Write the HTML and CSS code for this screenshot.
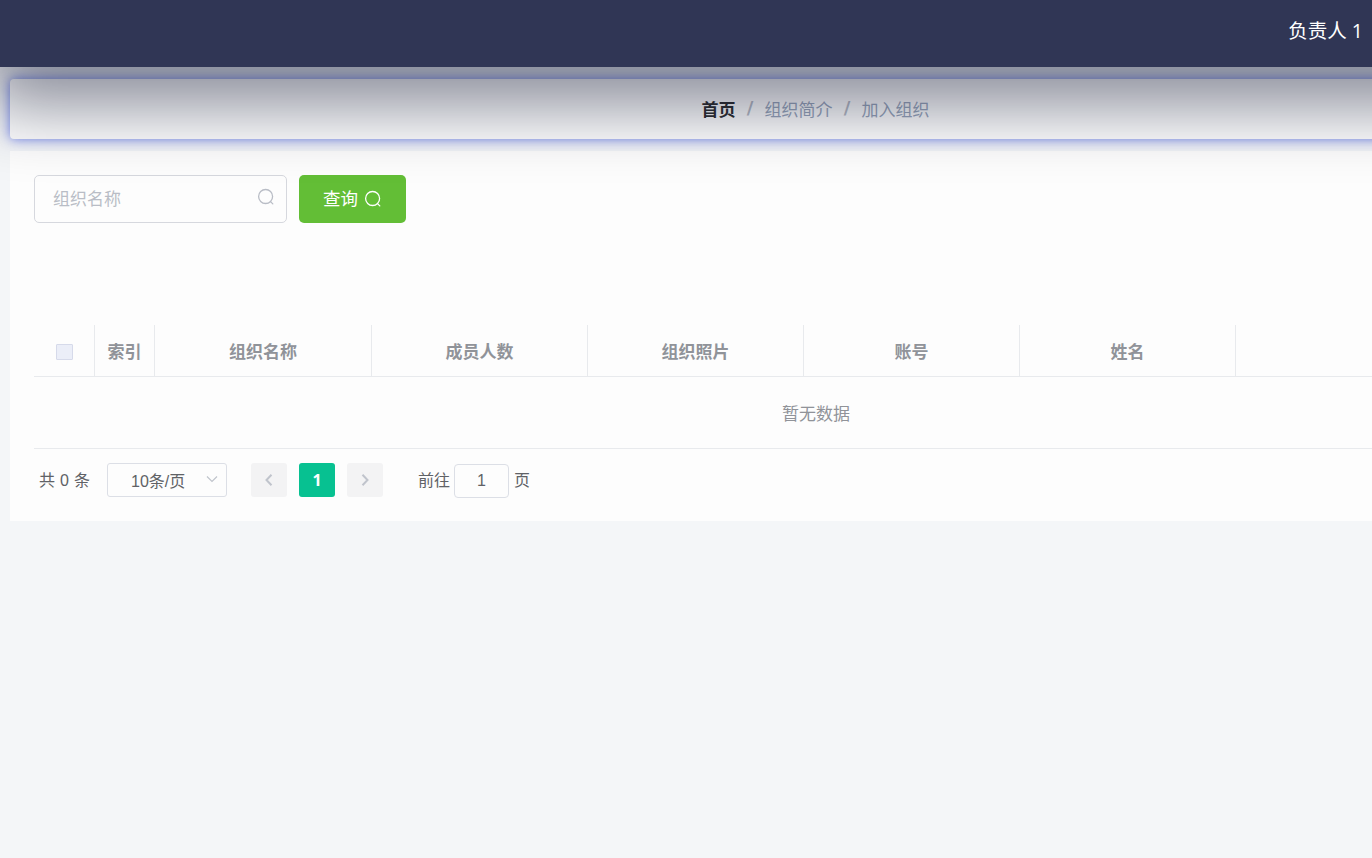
FILE: index.html
```html
<!DOCTYPE html>
<html lang="zh-CN">
<head>
<meta charset="utf-8">
<title>加入组织</title>
<link rel="stylesheet" href="styles.css">
</head>
<body>
<div class="page">
  <header class="header"><div class="user">负责人 1</div></header>
  <nav class="crumbs">
    <b class="home">首页</b><span class="sep">/</span><span>组织简介</span><span class="sep">/</span><span>加入组织</span>
  </nav>
  <main class="panel">
    <form class="search">
      <label class="field"><span>组织名称</span>
        <svg class="lens" viewBox="0 0 18 18"><circle cx="8.6" cy="8.5" r="7"/><path d="M13.5 13.6l2.3 2.3"/></svg>
      </label>
      <button class="query" type="button"><span>查询</span>
        <svg class="lens" viewBox="0 0 18 18"><circle cx="8.6" cy="8.5" r="7"/><path d="M13.5 13.6l2.3 2.3"/></svg>
      </button>
    </form>
    <section class="table">
      <div class="head">
        <div><i class="check"></i></div><div>索引</div><div>组织名称</div><div>成员人数</div><div>组织照片</div><div>账号</div><div>姓名</div><div></div>
      </div>
      <div class="empty">暂无数据</div>
    </section>
    <div class="pager">
      <span class="total">共 0 条</span>
      <div class="size"><span>10条/页</span><svg viewBox="0 0 12 12"><path d="M1 3.5l5 5 5-5"/></svg></div>
      <div class="btn prev"><svg viewBox="0 0 12 14"><path d="M8.5 1.8L3.5 7l5 5.2"/></svg></div>
      <div class="btn active">1</div>
      <div class="btn next"><svg viewBox="0 0 12 14"><path d="M3.5 1.8L8.5 7l-5 5.2"/></svg></div>
      <span class="goto">前往</span>
      <div class="jump">1</div>
      <span class="unit">页</span>
    </div>
  </main>
</div>
</body>
</html>
```
FILE: styles.css
```css
* { box-sizing: border-box; }
body {
  margin: 0;
  height: 858px;
  overflow: hidden;
  background: #f4f6f8;
  font-family: "Liberation Sans", "Noto Sans CJK SC", sans-serif;
  font-size: 17px;
}
.page { width: 1632px; }
.header {
  position: relative;
  z-index: 2;
  height: 67px;
  background: #303655;
  box-shadow: 0 22px 70px 16px rgba(4, 10, 38, .49);
}
.user {
  width: 1372px;
  padding-right: 9px;
  text-align: right;
  line-height: 62px;
  font-family: "Open Sans", "Noto Sans CJK SC", sans-serif;
  font-size: 19.5px;
  color: #fff;
}
.crumbs {
  display: flex;
  align-items: center;
  justify-content: center;
  height: 60px;
  margin: 12px 10px;
  padding: 0 1px 2px 0;
  border-radius: 4px;
  background: #fff;
  box-shadow: 0 0 12px 0 rgba(60, 85, 240, .7);
  color: #9ba8be;
}
.home { color: #303133; }
.sep { width: 29px; text-align: center; font-family: "DejaVu Sans", sans-serif; font-size: 18px; line-height: 20px; font-weight: 700; color: #b9bdc8; }
.panel {
  height: 370px;
  margin: 0 10px;
  padding: 24px;
  background: #fdfdfd;
  position: relative;
}
.search { display: flex; gap: 12px; height: 48px; }
.field {
  display: flex;
  align-items: center;
  justify-content: space-between;
  width: 253px;
  padding: 0 11px 4px 18px;
  border: 1px solid #d6d8de;
  border-radius: 5px;
  color: #b9bdc6;
}
.lens { width: 18px; height: 18px; fill: none; stroke: currentColor; stroke-width: 1.3; stroke-linecap: round; }
.query {
  display: flex;
  align-items: center;
  justify-content: center;
  gap: 6px;
  width: 107px;
  padding: 0;
  border: 0;
  border-radius: 5px;
  background: #63be36;
  color: #fff;
  font: inherit;
  font-size: 17.5px;
}
.query span { padding-bottom: 3px; }
.table { margin-top: 102px; }
.head {
  display: grid;
  grid-template-columns: 61px 60px 217px repeat(4, 216px) 1fr;
  height: 52px;
  border-bottom: 1px solid #e8eaed;
  font-weight: 700;
  color: #909399;
}
.head div { display: flex; align-items: center; justify-content: center; padding-bottom: 1px; border-right: 1px solid #e8eaed; }
.check { width: 17px; height: 16px; margin-top: 4px; border: 1px solid #d6daea; border-radius: 1px; background: #ebeef8; }
.empty {
  height: 72px;
  padding-top: 2px;
  border-bottom: 1px solid #e8eaed;
  text-align: center;
  line-height: 72px;
  color: #909399;
}
.pager {
  display: flex;
  align-items: center;
  height: 34px;
  margin-top: 14px;
  padding-left: 5px;
  font-size: 16px;
  color: #606266;
}
.total { width: 68px; word-spacing: .6px; }
.total, .goto, .unit { padding-bottom: 2px; }
.size {
  display: flex;
  align-items: center;
  justify-content: space-between;
  width: 120px;
  height: 34px;
  margin-right: 24px;
  padding: 0 8px 1px 23px;
  border: 1px solid #dcdfe6;
  border-radius: 3px;
}
.size svg { width: 12px; height: 12px; margin-bottom: 1px; fill: none; stroke: #c0c4cc; stroke-width: 1.2; }
.btn {
  display: flex;
  align-items: center;
  justify-content: center;
  width: 36px;
  height: 34px;
  margin-right: 12px;
  border-radius: 3px;
  background: #f3f3f4;
}
.btn svg { width: 12px; height: 14px; fill: none; stroke: #c0c4cc; stroke-width: 2; }
.active { background: #07c191; color: #fff; font-family: "Open Sans", sans-serif; font-weight: 700; }
.next { margin-right: 35px; }
.goto { width: 36px; }
.jump {
  width: 55px;
  height: 34px;
  margin: 2px 5px 0 0;
  border: 1px solid #dcdfe6;
  border-radius: 4px;
  text-align: center;
  line-height: 32px;
}
```
